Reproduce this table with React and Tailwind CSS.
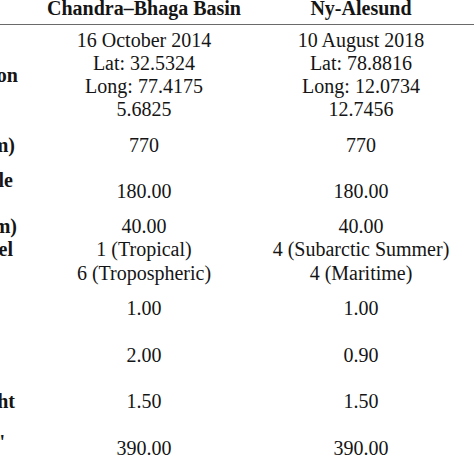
import React from "react"

const rows = [
  { label: ["Geometrical Condition"], pr: "pr-[2px]", values: [["16 October 2014", "Lat: 32.5324", "Long: 77.4175", "5.6825"], ["10 August 2018", "Lat: 78.8816", "Long: 12.0734", "12.7456"]], cls: "pt-[4px] pb-[12px]" },
  { label: ["Wavelength (nm)"], pr: "pr-[5px]", values: [["770"], ["770"]], cls: "pb-[11.5px]" },
  { label: ["Solar Azimuth Angle", "\u00a0"], pr: "pr-[7px]", values: [["180.00"], ["180.00"]], cls: "" },
  { label: ["Sensor Altitude (km)"], pr: "pr-[3px]", values: [["40.00"], ["40.00"]], cls: "" },
  { label: ["Atmospheric Model"], pr: "pr-[7px]", values: [["1 (Tropical)"], ["4 (Subarctic Summer)"]], cls: "" },
  { label: [""], pr: "", values: [["6 (Tropospheric)"], ["4 (Maritime)"]], cls: "" },
  { label: [""], pr: "", values: [["1.00"], ["1.00"]], cls: "h-[46.8px]" },
  { label: [""], pr: "", values: [["2.00"], ["0.90"]], cls: "h-[46.8px]" },
  { label: ["Flight Height"], pr: "pr-[5px]", values: [["1.50"], ["1.50"]], cls: "h-[46.8px]" },
  { label: ["'"], pr: "pr-[15px] mb-[12px]", values: [["390.00"], ["390.00"]], cls: "h-[46.8px]" },
]

const Cell = ({ lines }) => (
  <div className="flex flex-col items-center justify-center text-center whitespace-nowrap">
    {lines.map((l, i) => (
      <span key={i}>{l}</span>
    ))}
  </div>
)

export default function App() {
  return (
    <div
      className="w-[474px] h-[474px] overflow-hidden bg-white text-[#151515] text-[20px] leading-[23.3px]"
      style={{ fontFamily: '"Liberation Serif", "Times New Roman", serif' }}
    >
      <div className="-mt-[3.4px] grid grid-cols-[20px_248px_186px] pb-[3.7px] border-b-[1.5px] border-[#6a6a6a] font-bold">
        <div />
        <div className="text-center whitespace-nowrap">Chandra–Bhaga Basin</div>
        <div className="text-center whitespace-nowrap">Ny-Alesund</div>
      </div>
      {rows.map((r, i) => (
        <div key={i} className={`grid grid-cols-[20px_248px_186px] items-center ${r.cls}`}>
          <div className={`flex flex-col overflow-hidden font-bold ${r.pr}`}>
            {r.label.map((l, j) => (
              <div key={j} className="flex justify-end whitespace-nowrap">
                {l}
              </div>
            ))}
          </div>
          <Cell lines={r.values[0]} />
          <Cell lines={r.values[1]} />
        </div>
      ))}
    </div>
  )
}
